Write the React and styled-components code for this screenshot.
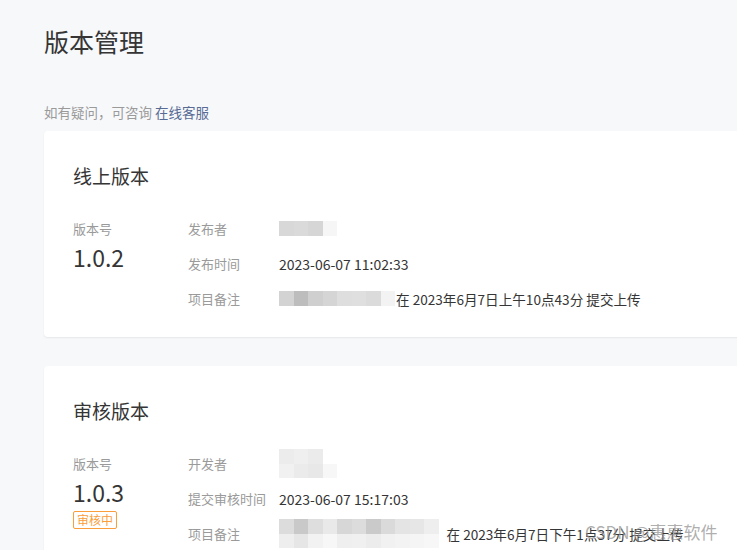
import React from "react";
import styled, { createGlobalStyle } from "styled-components";

const GlobalStyle = createGlobalStyle`
  html, body {
    margin: 0;
    padding: 0;
    background: #f7f8fa;
    overflow: hidden;
  }
  body {
    font-family: "Noto Sans CJK SC", "Noto Sans", sans-serif;
    color: #353535;
  }
`;

const versions = [
  {
    title: "线上版本",
    version: "1.0.2",
    rows: [
      {
        label: "发布者",
        mosaic: [["#d8d8d8", "#dadada", "#d6d6d6", "#f6f6f6"]],
      },
      { label: "发布时间", text: "2023-06-07 11:02:33" },
      {
        label: "项目备注",
        mosaic: [["#d3d3d3", "#bdbdbd", "#cfcfcf", "#d5d5d5", "#dedede", "#dfdfdf", "#dbdbdb", "#f3f3f3"]],
        note: "在 2023年6月7日上午10点43分 提交上传",
        gap: 1,
      },
    ],
  },
  {
    title: "审核版本",
    version: "1.0.3",
    tag: "审核中",
    rows: [
      {
        label: "开发者",
        mosaic: [
          ["#ececec", "#efefef", "#ebebeb"],
          ["#f1f1f1", "#ebebeb", "#e8e8e8", "#f7f7f7"],
        ],
      },
      { label: "提交审核时间", text: "2023-06-07 15:17:03" },
      {
        label: "项目备注",
        mosaic: [
          ["#dcdcdc", "#c9c9c9", "#dedede", "#e9e9e9", "#d7d7d7", "#dcdcdc", "#cacaca", "#dadada", "#e4e4e4", "#e6e6e6", "#eeeeee"],
          ["#eeeeee", "#e6e6e6", "#f2f2f2", "#f7f7f7", "#efefef", "#f0f0f0", "#ececec", "#f1f1f1", "#f3f3f3", "#f5f5f5", "#f7f7f7"],
        ],
        note: "在 2023年6月7日下午1点37分 提交上传",
        gap: 8,
      },
    ],
  },
];

const Mosaic = ({ rows }) => (
  <MosaicBox>
    {rows.map((row, i) => (
      <MosaicRow key={i}>
        {row.map((c, j) => (
          <Cell key={j} $color={c} />
        ))}
      </MosaicRow>
    ))}
  </MosaicBox>
);

const VersionCard = ({ data }) => (
  <Card>
    <CardTitle>{data.title}</CardTitle>
    <Body>
      <VersionCol>
        <Label>版本号</Label>
        <VersionNum>{data.version}</VersionNum>
        {data.tag && <Tag>{data.tag}</Tag>}
      </VersionCol>
      <InfoList>
        {data.rows.map((r) => (
          <InfoRow key={r.label}>
            <InfoLabel>{r.label}</InfoLabel>
            <Value>
              {r.mosaic && <Mosaic rows={r.mosaic} />}
              {r.text}
              {r.note && <Note $gap={r.gap}>{r.note}</Note>}
            </Value>
          </InfoRow>
        ))}
      </InfoList>
    </Body>
  </Card>
);

const App = () => (
  <>
    <GlobalStyle />
    <Page>
      <PageTitle>版本管理</PageTitle>
      <Hint>
        如有疑问，可咨询 <HintLink href="#">在线客服</HintLink>
      </Hint>
      <Cards>
        {versions.map((v) => (
          <VersionCard key={v.title} data={v} />
        ))}
      </Cards>
      <Watermark>CSDN @惠惠软件</Watermark>
    </Page>
  </>
);

export default App;

const Page = styled.div`
  position: relative;
  height: 550px;
  padding: 24px 0 0 44px;
  box-sizing: border-box;
  overflow: hidden;
`;

const PageTitle = styled.h1`
  margin: 0;
  font-size: 25px;
  font-weight: 400;
  line-height: 34px;
  color: #353535;
`;

const Hint = styled.div`
  margin-top: 44px;
  font-size: 13.5px;
  line-height: 20px;
  color: #9a9a9a;
`;

const HintLink = styled.a`
  color: #576b95;
  text-decoration: none;
`;

const Cards = styled.div`
  display: flex;
  flex-direction: column;
  gap: 29px;
  margin-top: 9px;
`;

const Card = styled.div`
  width: 740px;
  background: #ffffff;
  border-radius: 4px;
  box-shadow: 0 1px 2px rgba(0, 0, 0, 0.07);
  padding: 32px 29px 21px;
  box-sizing: border-box;
`;

const CardTitle = styled.div`
  font-size: 19px;
  line-height: 26px;
  color: #353535;
`;

const Body = styled.div`
  display: flex;
  margin-top: 22px;
`;

const VersionCol = styled.div`
  width: 115px;
  display: flex;
  flex-direction: column;
  align-items: flex-start;
`;

const Label = styled.div`
  font-size: 13px;
  line-height: 35px;
  color: #9a9a9a;
`;

const VersionNum = styled.div`
  font-size: 23px;
  line-height: 22px;
  color: #353535;
`;

const Tag = styled.span`
  margin-top: 8px;
  height: 18px;
  box-sizing: border-box;
  padding: 0 3px;
  border: 1px solid #fa9d3b;
  border-radius: 2px;
  color: #fa9d3b;
  font-size: 12px;
  line-height: 16px;
`;

const InfoList = styled.div`
  display: flex;
  flex-direction: column;
`;

const InfoRow = styled.div`
  display: flex;
  align-items: center;
  height: 35px;
`;

const InfoLabel = styled.div`
  width: 91px;
  font-size: 13px;
  color: #9a9a9a;
`;

const Value = styled.div`
  display: flex;
  align-items: center;
  font-size: 14px;
  color: #353535;
  white-space: nowrap;
`;

const Note = styled.span`
  margin-left: ${(p) => p.$gap}px;
  font-size: 13.6px;
`;

const MosaicBox = styled.div`
  display: flex;
  flex-direction: column;
`;

const MosaicRow = styled.div`
  display: flex;
`;

const Cell = styled.div`
  width: 14.5px;
  height: 14.5px;
  background: ${(p) => p.$color};
`;

const Watermark = styled.div`
  position: absolute;
  left: 585px;
  top: 520px;
  font-size: 17px;
  line-height: 24px;
  color: rgba(140, 140, 140, 0.7);
  pointer-events: none;
  white-space: nowrap;
`;
